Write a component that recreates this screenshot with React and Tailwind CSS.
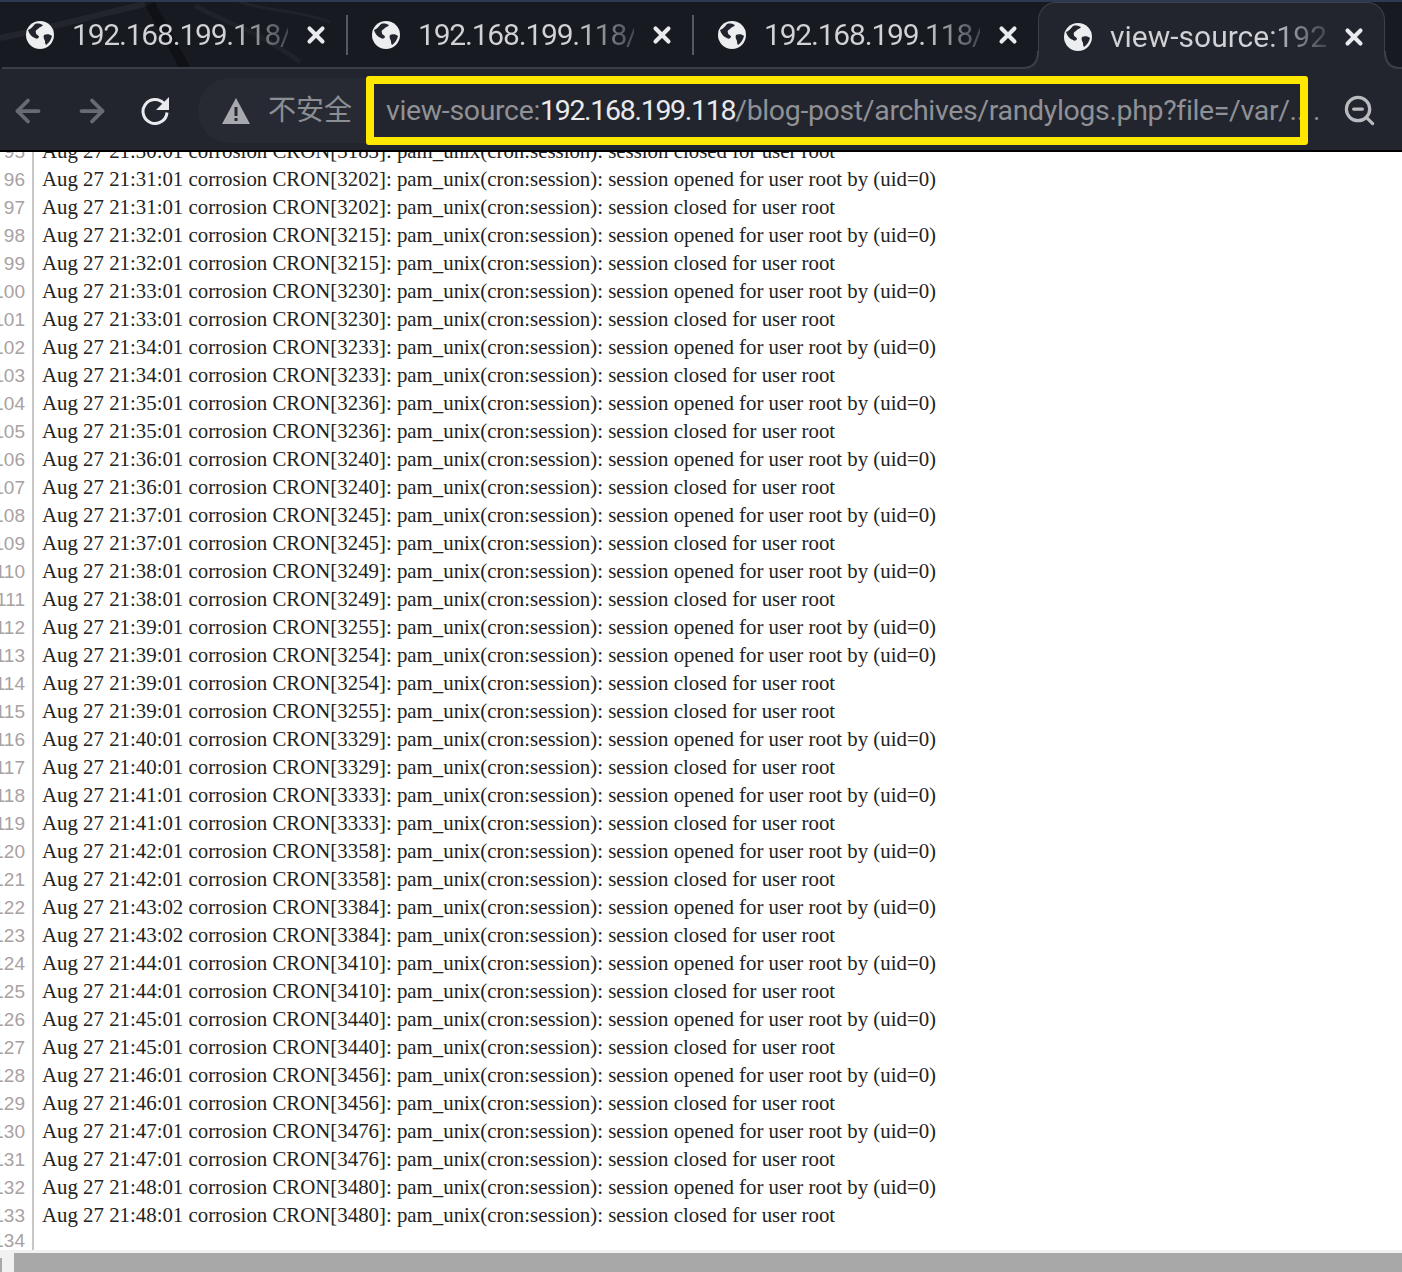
import { ArrowLeft, ArrowRight, ZoomOut, X } from 'lucide-react'

const rows = [
  ['21:30:01', '3183', 'closed'],
  ['21:31:01', '3202', 'opened'],
  ['21:31:01', '3202', 'closed'],
  ['21:32:01', '3215', 'opened'],
  ['21:32:01', '3215', 'closed'],
  ['21:33:01', '3230', 'opened'],
  ['21:33:01', '3230', 'closed'],
  ['21:34:01', '3233', 'opened'],
  ['21:34:01', '3233', 'closed'],
  ['21:35:01', '3236', 'opened'],
  ['21:35:01', '3236', 'closed'],
  ['21:36:01', '3240', 'opened'],
  ['21:36:01', '3240', 'closed'],
  ['21:37:01', '3245', 'opened'],
  ['21:37:01', '3245', 'closed'],
  ['21:38:01', '3249', 'opened'],
  ['21:38:01', '3249', 'closed'],
  ['21:39:01', '3255', 'opened'],
  ['21:39:01', '3254', 'opened'],
  ['21:39:01', '3254', 'closed'],
  ['21:39:01', '3255', 'closed'],
  ['21:40:01', '3329', 'opened'],
  ['21:40:01', '3329', 'closed'],
  ['21:41:01', '3333', 'opened'],
  ['21:41:01', '3333', 'closed'],
  ['21:42:01', '3358', 'opened'],
  ['21:42:01', '3358', 'closed'],
  ['21:43:02', '3384', 'opened'],
  ['21:43:02', '3384', 'closed'],
  ['21:44:01', '3410', 'opened'],
  ['21:44:01', '3410', 'closed'],
  ['21:45:01', '3440', 'opened'],
  ['21:45:01', '3440', 'closed'],
  ['21:46:01', '3456', 'opened'],
  ['21:46:01', '3456', 'closed'],
  ['21:47:01', '3476', 'opened'],
  ['21:47:01', '3476', 'closed'],
  ['21:48:01', '3480', 'opened'],
  ['21:48:01', '3480', 'closed'],
]

function Globe() {
  return (
    <svg width="28" height="28" viewBox="0 0 28 28" className="shrink-0">
      <circle cx="14" cy="14" r="14" fill="#eceef0" />
      <path d="M2 9c3-1 5-4 7-6 3-1 6 0 8 1-1 2-4 2-5 4-2 1-3 2-2 4 0 2 3 2 3 4-1 2-3 2-4 1-3-1-6-4-7-8z" fill="#22252d" />
      <path d="M18 14c2-1 6-1 8 1-1 4-3 7-6 9-1-1-1-3-1-4-1-2-2-4-1-6z" fill="#22252d" />
    </svg>
  )
}

function Tab({ title, active, sep }) {
  return (
    <div className={`relative flex h-full shrink-0 items-center pt-[1px] ${active ? '-ml-[2px] w-[347px] rounded-t-[18px] border border-b-0 border-[#3b4048] bg-[#22252d] pl-[25px]' : 'w-[346px] border-b-2 border-[#3a3d44] pl-[24px]'}`}>
      <Globe />
      <div className={`ml-[18px] h-[40px] w-[216px] shrink-0 overflow-hidden whitespace-nowrap bg-gradient-to-r from-[#d0d2d6] from-[74%] to-[#44474e] bg-clip-text text-[30px] leading-[40px] text-transparent ${active ? '' : 'tracking-[-1.2px]'}`}>
        {title}
      </div>
      <X size={26} strokeWidth={3.8} className="ml-[15px] shrink-0 text-[#e8eaed]" />
      {sep && <div className="ml-auto h-[40px] w-[2px] shrink-0 bg-[#55585e]" />}
      {active && (
        <>
          <svg width="18" height="18" viewBox="0 0 18 18" className="absolute -left-[18px] bottom-0">
            <path d="M0 18V16H2Q18 16 18 0V18Z" fill="#22252d" />
            <path d="M0 17H2Q17 17 17 0" fill="none" stroke="#3b4048" strokeWidth="2" />
          </svg>
          <svg width="18" height="18" viewBox="0 0 18 18" className="absolute -right-[18px] bottom-0">
            <path d="M18 18V16H16Q0 16 0 0V18Z" fill="#22252d" />
            <path d="M18 17H16Q1 17 1 0" fill="none" stroke="#3b4048" strokeWidth="2" />
          </svg>
        </>
      )}
    </div>
  )
}

export default function App() {
  return (
    <div className="flex h-[1272px] w-[1402px] flex-col overflow-hidden bg-white" style={{ fontFamily: '"Roboto", "Noto Sans CJK SC", sans-serif' }}>
      {/* Tab strip */}
      <div className="h-[2px] shrink-0 bg-[#2b3a50]" />
      <div className="relative flex h-[67px] shrink-0 items-start bg-[#181a21] pl-[2px]">
        {/* faint wallpaper behind the tabs */}
        <svg width="1402" height="67" className="absolute left-0 top-0">
          <path d="M0 36C50 26 100 12 145 2" fill="none" stroke="#23252c" strokeWidth="6" />
          <path d="M150 2 185 66" fill="none" stroke="#0f1116" strokeWidth="10" />
          <path d="M195 4C225 20 260 30 300 60" fill="none" stroke="#202229" strokeWidth="5" />
          <path d="M240 0C270 10 300 8 330 20" fill="none" stroke="#202229" strokeWidth="3" />
        </svg>
        <Tab title="192.168.199.118/" sep />
        <Tab title="192.168.199.118/" sep />
        <Tab title="192.168.199.118/" />
        <Tab title="view-source:192.168.199.118" active />
        <div className="h-full flex-1 border-b-2 border-[#3a3d44]" />
      </div>

      {/* Toolbar */}
      <div className="flex h-[81px] shrink-0 items-center bg-[#22252d] pl-[10px] pt-[2px]">
        <ArrowLeft size={36} strokeWidth={2.5} className="text-[#686b72]" />
        <ArrowRight size={36} strokeWidth={2.5} className="ml-[28px] text-[#686b72]" />
        <svg width="28" height="28" viewBox="0 0 28 28" className="ml-[31px] shrink-0">
          <path d="M23 6.5A12 12 0 1 0 26 15.5" fill="none" stroke="#e8eaed" strokeWidth="3" />
          <path d="M28 0V13H15Z" fill="#e8eaed" />
        </svg>
        <div className="ml-[29px] flex h-[65px] w-[168px] shrink-0 items-center rounded-l-[32px] bg-[#272a32] pl-[23px]">
          <svg width="30" height="28" viewBox="0 0 30 28">
            <path d="M15 1 29 27H1z" fill="#a7a9ae" />
            <rect x="13.5" y="10" width="3" height="9" fill="#272a32" />
            <rect x="13.5" y="21" width="3" height="3" fill="#272a32" />
          </svg>
          <span className="ml-[17px] text-[28px] text-[#8b8e94]">不安全</span>
        </div>
        <div className="flex h-[69px] w-[942px] shrink-0 items-center overflow-hidden rounded-[3px] border-[8px] border-[#ffe800] bg-[#22252d] pl-[12px] pt-[1px]">
          <span className="whitespace-nowrap text-[28.5px] tracking-[-0.35px] text-[#8f9196]">
            view-source:<span className="tracking-[-1.3px] text-[#e8eaed]">192.168.199.118</span>/blog-post/archives/randylogs.php?file=/var/...
          </span>
        </div>
        <span className="ml-[5px] text-[28px] leading-none text-[#8f9196]">.</span>
        <ZoomOut size={35} strokeWidth={2.2} className="ml-[22px] text-[#b9bbbf]" />
      </div>
      <div className="h-[2px] shrink-0 bg-black" />

      {/* Source view */}
      <div className="min-h-0 flex-1 overflow-hidden">
        <div className="-mt-[14px]" style={{ fontFamily: '"Liberation Serif", serif' }}>
          {rows.map(([time, pid, kind], i) => (
            <div key={i} className="flex h-[28px] items-center">
              <div className="flex h-full w-[34px] shrink-0 items-center justify-end overflow-hidden border-r-2 border-[#c8c8c8] pr-[7px] text-[19px] text-[#a8a2a2]" style={{ fontFamily: '"Liberation Sans", sans-serif' }}>
                {i + 95}
              </div>
              <div className="ml-[8px] whitespace-nowrap text-[20.85px] text-[#222]">
                Aug 27 {time} corrosion CRON[{pid}]: pam_unix(cron:session): session {kind === 'opened' ? 'opened for user root by (uid=0)' : 'closed for user root'}
              </div>
            </div>
          ))}
          <div className="flex h-[22px] items-center">
            <div className="flex h-full w-[34px] shrink-0 items-center justify-end overflow-hidden border-r-2 border-[#c8c8c8] pr-[7px] text-[19px] text-[#a8a2a2]" style={{ fontFamily: '"Liberation Sans", sans-serif' }}>
              134
            </div>
          </div>
        </div>
      </div>

      {/* Scrollbar */}
      <div className="flex h-[22px] shrink-0 items-end bg-[#f1f1f1]">
        <div className="h-[14px] w-[2px] bg-[#a8a8a8]" />
        <div className="ml-[12px] h-[19px] flex-1 bg-[#a8a8a8]" />
      </div>
    </div>
  )
}
